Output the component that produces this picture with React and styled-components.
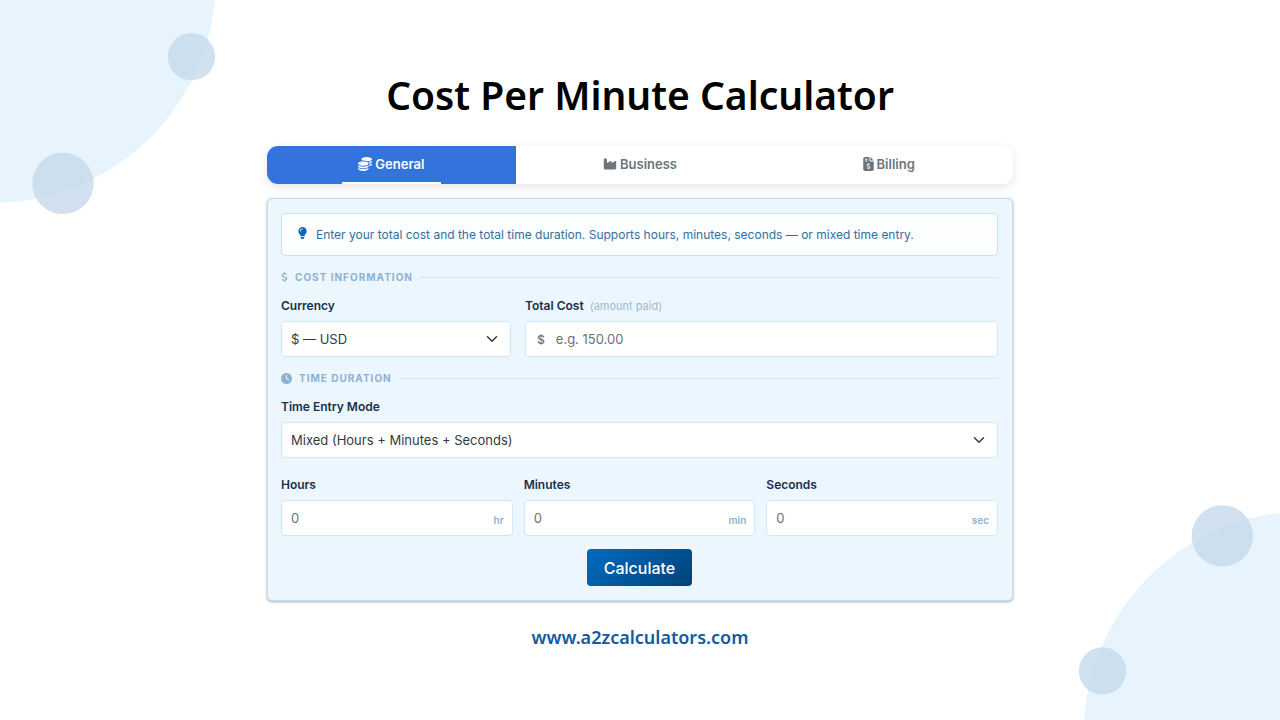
import React, { useState } from 'react';
import styled, { createGlobalStyle } from 'styled-components';
import { FaCoins, FaIndustry, FaFileInvoiceDollar, FaLightbulb, FaDollarSign, FaClock } from 'react-icons/fa6';

const GlobalStyle = createGlobalStyle`
  *, *::before, *::after {
    box-sizing: border-box;
  }
  body {
    margin: 0;
    background-color: #ffffff;
    font-family: Inter, "Liberation Sans", sans-serif;
  }
`;

const FIELD_BORDER = '#cde7fc';
const MUTED_COLOR = '#8fb1cf';
const LABEL_COLOR = '#1b2f4b';
const DOT_COLOR = '#c3d8ea';

const Page = styled.div`
  position: relative;
  min-height: 100vh;
  overflow: hidden;
`;

// background decoration, always kept in the corners
const Corner = styled.svg`
  position: absolute;
  width: 240px;
  height: 240px;
  ${({ $end }) => ($end ? 'right: 0; bottom: 0;' : 'left: 0; top: 0;')}
`;

const Main = styled.main`
  position: relative;
  display: flex;
  flex-direction: column;
  align-items: center;
  width: 100%;
  max-width: 778px;
  margin: 0 auto;
  padding: 68px 16px 32px;
`;

const Title = styled.h1`
  margin: 0 0 24px;
  font-family: "Noto Sans", "Open Sans", sans-serif;
  font-size: 39px;
  font-weight: 600;
  line-height: 54px;
  color: #000000;
  text-align: center;
`;

const Tabs = styled.div`
  display: flex;
  width: 100%;
  border-radius: 11px;
  overflow: hidden;
  background-color: #ffffff;
  box-shadow: 0 3px 11px rgba(0, 0, 0, 0.1);
`;

const Tab = styled.button`
  position: relative;
  flex: 1;
  display: flex;
  align-items: center;
  justify-content: center;
  gap: 3px;
  height: 38px;
  padding: 0 0 2px;
  border: none;
  font-family: inherit;
  font-size: 13px;
  font-weight: 600;
  color: ${({ $active }) => ($active ? '#ffffff' : '#6c757d')};
  background-color: ${({ $active }) => ($active ? '#3273dc' : '#ffffff')};
  cursor: pointer;

  &::after {
    content: "";
    display: ${({ $active }) => ($active ? 'block' : 'none')};
    position: absolute;
    left: 30%;
    bottom: 0;
    width: 40%;
    height: 2px;
    background-color: #ffffff;
  }
`;

// react-icons draws in a square box, these glyphs are narrower
const InvoiceIcon = styled(FaFileInvoiceDollar)`
  width: 11px;
`;

const DollarIcon = styled(FaDollarSign)`
  width: 7px;
`;

const BulbIcon = styled(FaLightbulb)`
  width: 9px;
  margin-bottom: 4px;
  color: #0568bd;
`;

const Panel = styled.form`
  display: flex;
  flex-direction: column;
  width: 100%;
  margin-top: 14px;
  padding: 14px 14px 14px 13px;
  border: 1px solid #c3ddf2;
  border-radius: 5px;
  background-color: #ebf6ff;
  box-shadow: 0 1px 3px rgba(0, 0, 0, 0.35);
`;

const Hint = styled.p`
  display: flex;
  align-items: center;
  gap: 9px;
  min-height: 43px;
  margin: 0;
  padding: 0 16px;
  border: 1px solid #c8e1fa;
  border-radius: 5px;
  background-color: #fcfdff;
  font-size: 12px;
  color: #336f9f;
`;

const SectionTitle = styled.h2`
  display: flex;
  align-items: center;
  gap: 7px;
  margin: 14px 0;
  font-size: 10px;
  font-weight: 700;
  line-height: 14px;
  letter-spacing: 1px;
  text-transform: uppercase;
  color: ${MUTED_COLOR};

  &::after {
    content: "";
    flex: 1;
    height: 1px;
    background-color: #cfe4f4;
  }
`;

const Row = styled.div`
  display: grid;
  grid-template-columns: ${({ $columns }) => $columns};
  gap: ${({ $gap }) => $gap}px;
`;

const Field = styled.div`
  display: flex;
  flex-direction: column;
  gap: 7px;
  min-width: 0;
`;

const Label = styled.label`
  font-size: 12px;
  font-weight: 600;
  line-height: 16px;
  color: ${LABEL_COLOR};

  span {
    margin-left: 3px;
    font-size: 11px;
    font-weight: 400;
    color: #a0b9d2;
  }
`;

const Control = styled.div`
  display: flex;
  align-items: center;
  position: relative;
  height: 36px;
  border: 1px solid ${FIELD_BORDER};
  border-radius: 4px;
  background-color: #ffffff;
`;

const Select = styled.select`
  appearance: none;
  width: 100%;
  height: 100%;
  padding: 0 32px 0 9px;
  border: none;
  background: transparent;
  font-family: inherit;
  font-size: 13px;
  color: #343a40;
`;

const Chevron = styled.svg`
  position: absolute;
  right: 12px;
  width: 12px;
  height: 12px;
  fill: none;
  stroke: #343a40;
  stroke-width: 2;
  stroke-linecap: round;
  stroke-linejoin: round;
  pointer-events: none;
`;

const Input = styled.input`
  flex: 1;
  min-width: 0;
  height: 100%;
  padding: 0 9px;
  border: none;
  background: transparent;
  font-family: inherit;
  font-size: 13px;
  color: #343a40;

  &::placeholder {
    color: #6c7075;
    opacity: 1;
  }
`;

const Prefix = styled.span`
  padding: 0 2px 0 11px;
  font-size: 12px;
  font-weight: 600;
  color: #5b7f9f;
`;

const Unit = styled.span`
  padding: 4px 8px 0 0;
  font-size: 10px;
  font-weight: 600;
  color: ${MUTED_COLOR};
`;

const TimeRow = styled(Row)`
  margin-top: 19px;
`;

const CalculateButton = styled.button`
  align-self: center;
  height: 37px;
  margin-top: 13px;
  padding: 0 17px;
  border: none;
  border-radius: 4px;
  background: linear-gradient(135deg, #006bc0 0%, #004378 100%);
  font-family: inherit;
  font-size: 16px;
  font-weight: 500;
  color: #ffffff;
  cursor: pointer;
`;

const SiteLink = styled.a`
  margin-top: 24px;
  font-family: "Noto Sans", "Open Sans", sans-serif;
  font-size: 18px;
  font-weight: 600;
  line-height: 24px;
  color: #145a9e;
  text-decoration: none;
`;

const tabs = [
  { id: 'general', name: 'General', icon: <FaCoins size={14} /> },
  { id: 'business', name: 'Business', icon: <FaIndustry size={14} /> },
  { id: 'billing', name: 'Billing', icon: <InvoiceIcon size={14} /> },
];

const timeFields = [
  { id: 'hours', name: 'Hours', unit: 'hr' },
  { id: 'minutes', name: 'Minutes', unit: 'min' },
  { id: 'seconds', name: 'Seconds', unit: 'sec' },
];

const SelectBox = ({ id, children }) => (
  <Control>
    <Select id={id}>{children}</Select>
    <Chevron viewBox="0 0 16 16" aria-hidden="true">
      <path d="m2 5 6 6 6-6" />
    </Chevron>
  </Control>
);

const App = () => {
  const [activeTab, setActiveTab] = useState('general');

  return (
    <Page>
      <GlobalStyle />
      <Corner viewBox="0 0 240 240" aria-hidden="true">
        <circle cx="-8" cy="-21" r="224" fill="#e8f4fd" />
        <circle cx="191.5" cy="56.7" r="23.7" fill={DOT_COLOR} fillOpacity="0.77" />
        <circle cx="63" cy="183.4" r="30.7" fill={DOT_COLOR} fillOpacity="0.77" />
      </Corner>
      <Corner $end viewBox="0 0 240 240" aria-hidden="true">
        <circle cx="267.5" cy="255" r="224" fill="#e8f4fd" />
        <circle cx="182.3" cy="55.9" r="30.7" fill={DOT_COLOR} fillOpacity="0.77" />
        <circle cx="62.5" cy="190.9" r="23.7" fill={DOT_COLOR} fillOpacity="0.77" />
      </Corner>
      <Main>
        <Title>Cost Per Minute Calculator</Title>
        <Tabs role="tablist">
          {tabs.map(({ id, name, icon }) => (
            <Tab
              key={id}
              type="button"
              role="tab"
              aria-selected={activeTab === id}
              $active={activeTab === id}
              onClick={() => setActiveTab(id)}
            >
              {icon}
              {name}
            </Tab>
          ))}
        </Tabs>
        <Panel onSubmit={(e) => e.preventDefault()}>
          <Hint>
            <BulbIcon size={12} />
            Enter your total cost and the total time duration. Supports hours, minutes, seconds — or mixed time entry.
          </Hint>

          <SectionTitle><DollarIcon size={10} />Cost Information</SectionTitle>
          <Row $columns="230fr 473fr" $gap={14}>
            <Field>
              <Label htmlFor="currency">Currency</Label>
              <SelectBox id="currency">
                <option>$ — USD</option>
              </SelectBox>
            </Field>
            <Field>
              <Label htmlFor="cost">Total Cost <span>(amount paid)</span></Label>
              <Control>
                <Prefix>$</Prefix>
                <Input id="cost" type="text" inputMode="decimal" placeholder="e.g. 150.00" />
              </Control>
            </Field>
          </Row>

          <SectionTitle><FaClock size={11} />Time Duration</SectionTitle>
          <Field>
            <Label htmlFor="mode">Time Entry Mode</Label>
            <SelectBox id="mode">
              <option>Mixed (Hours + Minutes + Seconds)</option>
            </SelectBox>
          </Field>
          <TimeRow $columns="repeat(3, 1fr)" $gap={11}>
            {timeFields.map(({ id, name, unit }) => (
              <Field key={id}>
                <Label htmlFor={id}>{name}</Label>
                <Control>
                  <Input id={id} type="text" inputMode="numeric" placeholder="0" />
                  <Unit>{unit}</Unit>
                </Control>
              </Field>
            ))}
          </TimeRow>
          <CalculateButton type="submit">Calculate</CalculateButton>
        </Panel>
        <SiteLink href="#">www.a2zcalculators.com</SiteLink>
      </Main>
    </Page>
  );
};

export default App;
